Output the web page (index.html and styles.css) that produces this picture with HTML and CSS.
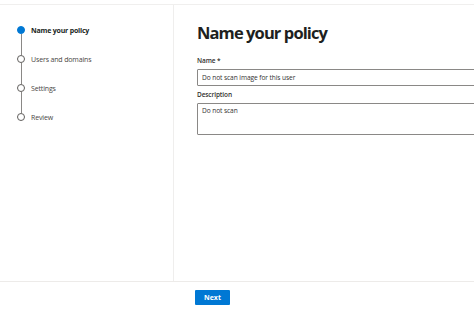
FILE: index.html
```html
<!DOCTYPE html>
<html>
<head>
<meta charset="utf-8">
<link rel="stylesheet" href="styles.css">
</head>
<body>
<div class="app">
  <div class="main">
    <nav class="nav">
      <div class="step active">
        <div class="marker"><span class="dot"></span><span class="line"></span></div>
        <span class="label">Name your policy</span>
      </div>
      <div class="step">
        <div class="marker"><span class="dot"></span><span class="line"></span></div>
        <span class="label">Users and domains</span>
      </div>
      <div class="step">
        <div class="marker"><span class="dot"></span><span class="line"></span></div>
        <span class="label">Settings</span>
      </div>
      <div class="step last">
        <div class="marker"><span class="dot"></span></div>
        <span class="label">Review</span>
      </div>
    </nav>
    <section class="content">
      <h1 class="title">Name your policy</h1>
      <label class="field-label">Name *</label>
      <div class="input">Do not scan image for this user</div>
      <label class="field-label desc">Description</label>
      <div class="textarea">Do not scan</div>
    </section>
  </div>
  <footer class="footer">
    <button class="next">Next</button>
  </footer>
</div>
</body>
</html>
```

FILE: styles.css
```css
html, body {
  margin: 0;
  padding: 0;
  background: #ffffff;
  overflow: hidden;
}
body {
  font-family: "Open Sans", "Noto Sans", sans-serif;
  color: #323130;
}
.app {
  width: 474px;
  height: 311px;
  padding-top: 4px;
  box-sizing: border-box;
  display: flex;
  flex-direction: column;
}
.main {
  display: flex;
  border-top: 1px solid #f0efee;
  height: 276px;
  flex: none;
}
.nav {
  width: 174px;
  flex: none;
  border-right: 1px solid #efeeed;
  padding: 21px 0 0 17px;
  box-sizing: border-box;
}
.step {
  display: flex;
  align-items: flex-start;
  gap: 6px;
}
.marker {
  width: 8px;
  display: flex;
  flex-direction: column;
  align-items: center;
}
.dot {
  width: 8px;
  height: 8px;
  box-sizing: border-box;
  border: 1px solid #605e5c;
  border-radius: 50%;
  background: #fff;
}
.step.active .dot {
  background: #0078d4;
  border-color: #0078d4;
}
.line {
  width: 1px;
  height: 21px;
  background: #8a8886;
}
.label {
  font-size: 7px;
  line-height: 8px;
  margin-top: 1px;
  color: #484644;
  white-space: nowrap;
  letter-spacing: -0.15px;
}
.step.active .label {
  font-weight: 700;
  color: #201f1e;
  letter-spacing: -0.2px;
}
.content {
  flex: 1;
  padding: 16px 0 0 23px;
  min-width: 0;
}
.title {
  margin: 0;
  font-size: 16.5px;
  line-height: 24px;
  font-weight: 700;
  color: #201f1e;
  letter-spacing: -0.9px;
}
.field-label {
  display: block;
  font-size: 6.5px;
  line-height: 10px;
  margin-top: 11px;
  font-weight: 600;
  color: #323130;
  letter-spacing: -0.1px;
}
.field-label.desc {
  margin-top: 4px;
}
.input, .textarea {
  width: 300px;
  box-sizing: border-box;
  border: 1px solid #8a8886;
  border-radius: 1px;
  font-size: 6.6px;
  color: #323130;
  padding-left: 4px;
  margin-top: 3px;
  letter-spacing: -0.08px;
}
.input {
  height: 17px;
  line-height: 15px;
}
.textarea {
  height: 32px;
  line-height: 10px;
  padding-top: 2px;
}
.footer {
  border-top: 1px solid #edebe9;
  padding: 8px 0 0 195px;
}
.next {
  display: block;
  width: 35px;
  height: 15px;
  border: none;
  border-radius: 1px;
  background: #0078d4;
  color: #ffffff;
  font-family: "Open Sans", "Noto Sans", sans-serif;
  font-size: 7px;
  font-weight: 700;
  padding: 0;
}
```
